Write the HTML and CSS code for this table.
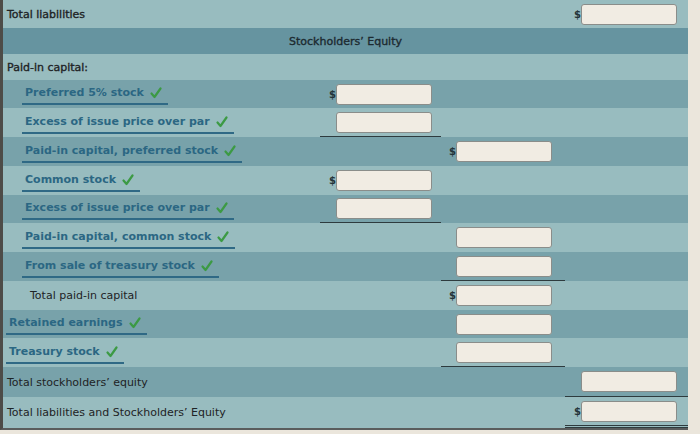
FILE: index.html
```html
<!DOCTYPE html>
<html>
<head>
<meta charset="utf-8">
<link rel="stylesheet" href="styles.css">
</head>
<body>
<svg width="0" height="0" class="defs">
  <symbol id="chk" viewBox="0 0 12 12"><path d="M1.5 6.5 L4.5 10 L10.5 1.5" fill="none" stroke="#3c9a44" stroke-width="2.2" stroke-linecap="round" stroke-linejoin="round"/></symbol>
</svg>
<div class="page">
  <div class="sheet">
    <div class="row light h28">
      <div class="lab plain strong">Total liabilities</div>
      <div class="cell"></div><div class="cell"></div>
      <div class="cell c3"><span class="dol">$</span><span class="inp"></span></div>
    </div>
    <div class="row head">
      <div class="title">Stockholders’ Equity</div>
    </div>
    <div class="row light h26">
      <div class="lab plain strong">Paid-in capital:</div>
      <div class="cell"></div><div class="cell"></div><div class="cell"></div>
    </div>
    <div class="row dark h28">
      <div class="lab ind"><span class="sel">Preferred 5% stock<svg class="ck"><use href="#chk"/></svg></span></div>
      <div class="cell ca"><span class="dol">$</span><span class="inp"></span></div>
      <div class="cell"></div><div class="cell"></div>
    </div>
    <div class="row light h29">
      <div class="lab ind"><span class="sel">Excess of issue price over par<svg class="ck"><use href="#chk"/></svg></span></div>
      <div class="cell ca ul"><span class="inp"></span></div>
      <div class="cell"></div><div class="cell"></div>
    </div>
    <div class="row dark h29">
      <div class="lab ind"><span class="sel">Paid-in capital, preferred stock<svg class="ck"><use href="#chk"/></svg></span></div>
      <div class="cell"></div>
      <div class="cell cb"><span class="dol">$</span><span class="inp"></span></div>
      <div class="cell"></div>
    </div>
    <div class="row light h29">
      <div class="lab ind"><span class="sel">Common stock<svg class="ck"><use href="#chk"/></svg></span></div>
      <div class="cell ca"><span class="dol">$</span><span class="inp"></span></div>
      <div class="cell"></div><div class="cell"></div>
    </div>
    <div class="row dark h28">
      <div class="lab ind"><span class="sel">Excess of issue price over par<svg class="ck"><use href="#chk"/></svg></span></div>
      <div class="cell ca ul"><span class="inp"></span></div>
      <div class="cell"></div><div class="cell"></div>
    </div>
    <div class="row light h29">
      <div class="lab ind"><span class="sel">Paid-in capital, common stock<svg class="ck"><use href="#chk"/></svg></span></div>
      <div class="cell"></div>
      <div class="cell cb"><span class="inp"></span></div>
      <div class="cell"></div>
    </div>
    <div class="row dark h29">
      <div class="lab ind"><span class="sel">From sale of treasury stock<svg class="ck"><use href="#chk"/></svg></span></div>
      <div class="cell"></div>
      <div class="cell cb ul"><span class="inp"></span></div>
      <div class="cell"></div>
    </div>
    <div class="row light h29">
      <div class="lab plain ind2">Total paid-in capital</div>
      <div class="cell"></div>
      <div class="cell cb"><span class="dol">$</span><span class="inp"></span></div>
      <div class="cell"></div>
    </div>
    <div class="row dark h28">
      <div class="lab"><span class="sel">Retained earnings<svg class="ck"><use href="#chk"/></svg></span></div>
      <div class="cell"></div>
      <div class="cell cb"><span class="inp"></span></div>
      <div class="cell"></div>
    </div>
    <div class="row light h29">
      <div class="lab"><span class="sel">Treasury stock<svg class="ck"><use href="#chk"/></svg></span></div>
      <div class="cell"></div>
      <div class="cell cb ul"><span class="inp"></span></div>
      <div class="cell"></div>
    </div>
    <div class="row dark h30">
      <div class="lab plain">Total stockholders’ equity</div>
      <div class="cell"></div><div class="cell"></div>
      <div class="cell c3 ul"><span class="inp"></span></div>
    </div>
    <div class="row light h31">
      <div class="lab plain">Total liabilities and Stockholders’ Equity</div>
      <div class="cell"></div><div class="cell"></div>
      <div class="cell c3 dbl"><span class="dol">$</span><span class="inp"></span></div>
    </div>
  </div>
</div>
</body>
</html>
```
FILE: styles.css
```css
html, body {
  margin: 0;
  padding: 0;
  background: #ece8df;
}
.defs {
  position: absolute;
  width: 0;
  height: 0;
}
.page {
  width: 700px;
  height: 434px;
  background: #ebe6dc;
  font-family: "DejaVu Sans", Verdana, sans-serif;
  font-size: 11px;
  color: #1e2a2e;
}
.sheet {
  width: 685px;
  border-left: 3px solid #4d4c48;
  border-bottom: 2px solid #5a5d5d;
}
.row {
  display: grid;
  grid-template-columns: 317px 121px 124px 123px;
  align-items: stretch;
}
.h26 { height: 26px; }
.h28 { height: 28px; }
.h29 { height: 29px; }
.h30 { height: 30px; }
.h31 { height: 31px; }
.light { background: #98bcbf; }
.dark { background: #78a2aa; }
.head {
  display: flex;
  justify-content: center;
  align-items: center;
  height: 26px;
  background: #6694a0;
}
.title {
  color: #1c2a30;
  font-size: 11px;
  -webkit-text-stroke: 0.35px #1c2a30;
}
.lab {
  display: flex;
  align-items: flex-end;
  padding: 0 0 3px 3px;
}
.lab.plain {
  align-items: center;
  padding: 0 0 0 4px;
  color: #1e2325;
}
.lab.strong {
  -webkit-text-stroke: 0.35px #1e2325;
}
.lab.ind { padding-left: 19px; }
.lab.ind2 { padding-left: 27px; }
.sel {
  display: inline-flex;
  align-items: center;
  gap: 6px;
  padding: 0 6px 4px 3px;
  border-bottom: 2px solid #2f6985;
  font-weight: bold;
  color: #2b6783;
}
.ck {
  width: 12px;
  height: 12px;
}
.cell {
  display: flex;
  align-items: center;
  position: relative;
}
.ca { padding-left: 16px; }
.cb { padding-left: 15px; }
.c3 { padding-left: 16px; }
.dol {
  position: absolute;
  margin-left: -7px;
  font-weight: bold;
  color: #24343a;
  font-size: 10px;
}
.ca .dol, .c3 .dol { left: 16px; }
.cb .dol { left: 15px; }
.inp {
  display: block;
  width: 96px;
  height: 21px;
  background: #f1ece3;
  border: 1px solid #8a8d8a;
  border-radius: 3px;
  box-sizing: border-box;
}
.ul { border-bottom: 1px solid #2e3b3e; }
.dbl { border-bottom: 3px double #2e3b3e; }
```
